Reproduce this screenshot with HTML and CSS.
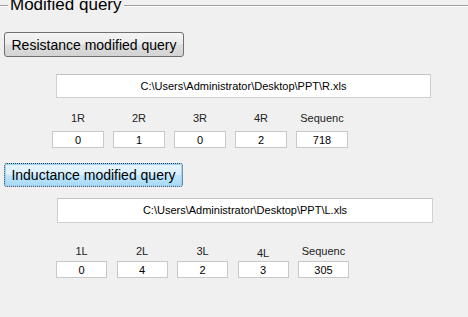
FILE: index.html
```html
<!DOCTYPE html>
<html lang="en">
<head>
    <meta charset="UTF-8">
    <title>Modified query</title>
    <link rel="stylesheet" href="styles.css">
</head>
<body>
    <div class="legend">
        <span class="rule short"></span>
        <span class="legend-text">Modified query</span>
        <span class="rule long"></span>
    </div>

    <section class="query first">
        <button class="btn">Resistance modified query</button>
        <div class="path">C:\Users\Administrator\Desktop\PPT\R.xls</div>
        <div class="fields">
            <div class="field"><label>1R</label><input type="text" value="0"></div>
            <div class="field"><label>2R</label><input type="text" value="1"></div>
            <div class="field"><label>3R</label><input type="text" value="0"></div>
            <div class="field"><label>4R</label><input type="text" value="2"></div>
            <div class="field"><label>Sequenc</label><input type="text" value="718"></div>
        </div>
    </section>

    <section class="query second">
        <button class="btn focused">Inductance modified query</button>
        <div class="path">C:\Users\Administrator\Desktop\PPT\L.xls</div>
        <div class="fields">
            <div class="field"><label>1L</label><input type="text" value="0"></div>
            <div class="field"><label>2L</label><input type="text" value="4"></div>
            <div class="field"><label>3L</label><input type="text" value="2"></div>
            <div class="field"><label class="low">4L</label><input type="text" value="3"></div>
            <div class="field"><label>Sequenc</label><input type="text" value="305"></div>
        </div>
    </section>
</body>
</html>
```

FILE: styles.css
```css
body { margin: 0; background: #f0f0f0; font-family: "Liberation Sans", Arial, sans-serif; overflow: hidden; }

/* group box title */
.legend { display: flex; margin-top: -5px; height: 20px; }
.rule { margin-top: 10px; height: 0; border-top: 1px solid #a0a0a0; border-bottom: 1px solid #fff; }
.rule.short { width: 8px; }
.rule.long { flex: 1; }
.legend-text { font-size: 17px; line-height: 20px; padding: 0 2px; color: #000; }

.query { padding-left: 4px; }
.btn { display: block; width: 180px; height: 25px; margin-top: 17px; padding: 0; font: 14px "Liberation Sans", Arial, sans-serif; color: #000; border: 1px solid #707070; border-radius: 3px; background: linear-gradient(#f4f4f4, #ececec 48%, #dedede 52%, #d3d3d3); }
.btn.focused { width: 179px; height: 24px; margin-top: 15px; border: 1px dotted #1c3c58; background: linear-gradient(#e8f5fc, #d9f0fc 48%, #bee6fd 52%, #a7d9f5); box-shadow: inset 0 0 0 1px #9fd0ef; }

.path { margin: 17px 0 0 52px; width: 375px; height: 24px; box-sizing: border-box; border: 1px solid #d0d0d0; border-top-color: #c4c4c4; background: #fff; font-size: 11px; line-height: 22px; text-align: center; color: #000; }
.second .path { margin: 11px 0 0 53px; width: 376px; height: 25px; line-height: 23px; }

.fields { display: flex; gap: 9px; margin: 13px 0 0 48px; }
.second .fields { margin: 21px 0 0 52px; gap: 9.5px; }
.field { display: flex; flex-direction: column; gap: 6px; width: 52px; }
.second .field { gap: 3px; width: 51px; }
.field label { font-size: 11px; line-height: 14px; text-align: center; color: #222; }
.field label.low { position: relative; top: 2px; }
.field input { width: 100%; height: 17px; box-sizing: border-box; margin: 0; padding: 0; border: 1px solid #c8c8c8; background: #fff; font: 11px "Liberation Sans", Arial, sans-serif; color: #000; text-align: center; }
```
